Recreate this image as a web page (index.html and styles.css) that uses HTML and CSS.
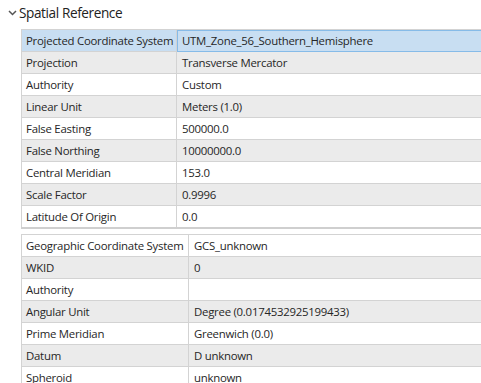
FILE: index.html
```html
<!DOCTYPE html>
<html lang="en">
<head>
<meta charset="utf-8">
<title>Spatial Reference</title>
<link rel="stylesheet" href="styles.css">
</head>
<body>
<section class="panel">
  <header class="panel-head">
    <svg class="chevron" width="9" height="6" viewBox="0 0 9 6"><path d="M1 1 L4.5 4.5 L8 1" fill="none" stroke="#555" stroke-width="1.5"/></svg>
    <h2 class="panel-title">Spatial Reference</h2>
  </header>

  <table class="props props-projected">
    <tr class="selected"><td class="key">Projected Coordinate System</td><td class="val focus">UTM_Zone_56_Southern_Hemisphere</td></tr>
    <tr class="alt"><td class="key">Projection</td><td class="val">Transverse Mercator</td></tr>
    <tr><td class="key">Authority</td><td class="val">Custom</td></tr>
    <tr class="alt"><td class="key">Linear Unit</td><td class="val">Meters (1.0)</td></tr>
    <tr><td class="key">False Easting</td><td class="val">500000.0</td></tr>
    <tr class="alt"><td class="key">False Northing</td><td class="val">10000000.0</td></tr>
    <tr><td class="key">Central Meridian</td><td class="val">153.0</td></tr>
    <tr class="alt"><td class="key">Scale Factor</td><td class="val">0.9996</td></tr>
    <tr class="last"><td class="key">Latitude Of Origin</td><td class="val">0.0</td></tr>
  </table>

  <table class="props props-geographic">
    <tr><td class="key">Geographic Coordinate System</td><td class="val">GCS_unknown</td></tr>
    <tr class="alt"><td class="key">WKID</td><td class="val">0</td></tr>
    <tr><td class="key">Authority</td><td class="val"></td></tr>
    <tr class="alt"><td class="key">Angular Unit</td><td class="val">Degree (0.0174532925199433)</td></tr>
    <tr><td class="key">Prime Meridian</td><td class="val">Greenwich (0.0)</td></tr>
    <tr class="alt"><td class="key">Datum</td><td class="val">D unknown</td></tr>
    <tr><td class="key">Spheroid</td><td class="val">unknown</td></tr>
  </table>
</section>
</body>
</html>
```

FILE: styles.css
```css
html, body {
  margin: 0;
  padding: 0;
  overflow: hidden;
  background: #ffffff;
}

body {
  font-family: "Open Sans", "Noto Sans", sans-serif;
  color: #262626;
}

.panel {
  width: 520px;
}

.panel-head {
  display: flex;
  align-items: center;
  height: 29px;
  padding-left: 8px;
  box-sizing: border-box;
}

.chevron {
  display: block;
  margin-top: -3px;
}

.panel-title {
  margin: 0 0 0 2px;
  font-size: 13.6px;
  letter-spacing: -0.4px;
  font-weight: 400;
  color: #222222;
  line-height: 18px;
  position: relative;
  top: -2px;
}

.props {
  margin-left: 21px;
  width: 499px;
  border-collapse: collapse;
  table-layout: fixed;
  font-size: 11.4px;
  letter-spacing: -0.25px;
}

.props td {
  height: 22px;
  padding: 0 0 0 5px;
  border: 1px solid #d3d3d3;
  border-right: none;
  white-space: nowrap;
  overflow: hidden;
  box-sizing: border-box;
  line-height: 21px;
}

.props td.key {
  padding-left: 4px;
  border-right: 1px solid #d3d3d3;
}

.props-projected td.key { width: 155px; }
.props-geographic td.key { width: 167px; }

.props tr.alt td {
  background: #ebebeb;
}

.props tr.selected td {
  background: #c8def2;
}

.props td.focus {
  outline: 1px solid #86bbe8;
  outline-offset: -1px;
}

.props tr.last td {
  border-bottom: 2px solid #cfcfcf;
}

.props-geographic {
  margin-top: 5px;
}
```
